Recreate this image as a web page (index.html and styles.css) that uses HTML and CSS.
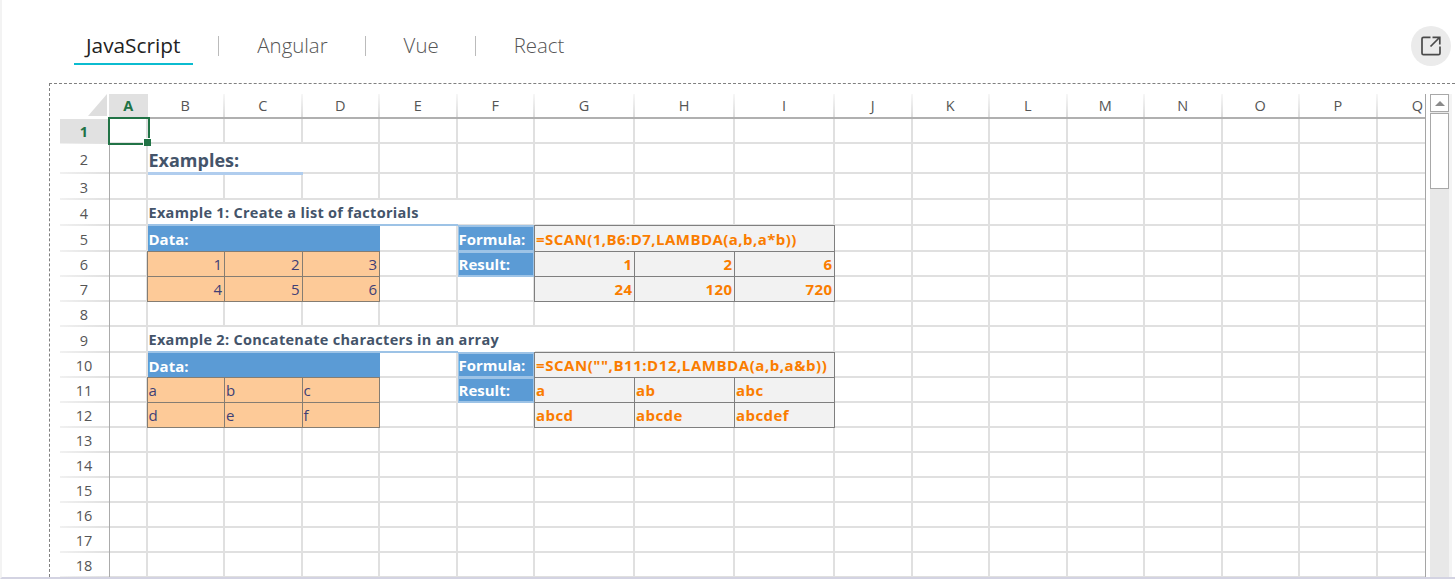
FILE: index.html
```html
<!DOCTYPE html>
<html lang="en">
<head>
<meta charset="utf-8">
<title>SCAN examples</title>
<link rel="stylesheet" href="styles.css">
</head>
<body>
<div class="page">
  <header class="topbar">
    <nav class="tabs">
      <a class="tab active">JavaScript</a>
      <span class="sep"></span>
      <a class="tab">Angular</a>
      <span class="sep"></span>
      <a class="tab">Vue</a>
      <span class="sep"></span>
      <a class="tab">React</a>
    </nav>
    <button class="open-btn" aria-label="Open in new window">
      <svg width="20" height="20" viewBox="0 0 20 20" fill="none" stroke="#4a4a4a" stroke-width="1.7">
        <path d="M9.5 1.3H2.5A1.5 1.5 0 0 0 1 2.8V17.2A1.5 1.5 0 0 0 2.5 18.7H17.5A1.5 1.5 0 0 0 19 17.2V10.5"/>
        <path d="M9.5 10.5L18.5 1.5M11.5 1.3H18.8V8.5"/>
      </svg>
    </button>
  </header>

  <section class="frame">
    <div class="grid">
      <!-- grid lines -->
      <i class="vl ca"></i><i class="vl cb"></i><i class="vl cc"></i><i class="vl cd"></i><i class="vl ce"></i><i class="vl cf"></i>
      <i class="vl cg"></i><i class="vl ch"></i><i class="vl ci"></i><i class="vl cj"></i><i class="vl ck"></i><i class="vl cl"></i>
      <i class="vl cm"></i><i class="vl cn"></i><i class="vl co"></i><i class="vl cp"></i>
      <i class="hl r1"></i><i class="hl r2"></i><i class="hl r3"></i><i class="hl r4"></i><i class="hl r5"></i><i class="hl r6"></i>
      <i class="hl r7"></i><i class="hl r8"></i><i class="hl r9"></i><i class="hl r10"></i><i class="hl r11"></i><i class="hl r12"></i>
      <i class="hl r13"></i><i class="hl r14"></i><i class="hl r15"></i><i class="hl r16"></i><i class="hl r17"></i><i class="hl r18"></i>
      <i class="rowhead-line"></i>
      <i class="colhead-line"></i>
      <i class="edge-line"></i>

      <!-- column headers -->
      <div class="corner"><span class="corner-tri"></span></div>
      <div class="ch-cell ca sel">A</div>
      <div class="ch-cell cb">B</div><div class="ch-cell cc">C</div><div class="ch-cell cd">D</div><div class="ch-cell ce">E</div>
      <div class="ch-cell cf">F</div><div class="ch-cell cg">G</div><div class="ch-cell ch">H</div><div class="ch-cell ci">I</div>
      <div class="ch-cell cj">J</div><div class="ch-cell ck">K</div><div class="ch-cell cl">L</div><div class="ch-cell cm">M</div>
      <div class="ch-cell cn">N</div><div class="ch-cell co">O</div><div class="ch-cell cp">P</div><div class="ch-cell cq">Q</div>

      <!-- row headers -->
      <div class="rh r1 sel">1</div><div class="rh r2">2</div><div class="rh r3">3</div><div class="rh r4">4</div>
      <div class="rh r5">5</div><div class="rh r6">6</div><div class="rh r7">7</div><div class="rh r8">8</div>
      <div class="rh r9">9</div><div class="rh r10">10</div><div class="rh r11">11</div><div class="rh r12">12</div>
      <div class="rh r13">13</div><div class="rh r14">14</div><div class="rh r15">15</div><div class="rh r16">16</div>
      <div class="rh r17">17</div><div class="rh r18">18</div>

      <!-- content -->
      <div class="title r2 b-d">Examples:</div>

      <div class="heading r4 b-f">Example 1: Create a list of factorials</div>
      <div class="label r5 b-e">Data:</div>
      <div class="input num r6 cb">1</div><div class="input num r6 cc">2</div><div class="input num r6 cd">3</div>
      <div class="input num r7 cb">4</div><div class="input num r7 cc">5</div><div class="input num r7 cd">6</div>
      <div class="label boxed r5 cf">Formula:</div>
      <div class="label boxed r6 cf">Result:</div>
      <div class="out r5 g-j">=SCAN(1,B6:D7,LAMBDA(a,b,a*b))</div>
      <div class="out num r6 cg">1</div><div class="out num r6 ch">2</div><div class="out num r6 ci">6</div>
      <div class="out num r7 cg">24</div><div class="out num r7 ch">120</div><div class="out num r7 ci">720</div>

      <div class="blank r9 cf"></div>
      <div class="heading r9 b-f">Example 2: Concatenate characters in an array</div>
      <div class="label r10 b-e">Data:</div>
      <div class="input r11 cb">a</div><div class="input r11 cc">b</div><div class="input r11 cd">c</div>
      <div class="input r12 cb">d</div><div class="input r12 cc">e</div><div class="input r12 cd">f</div>
      <div class="label boxed r10 cf">Formula:</div>
      <div class="label boxed r11 cf">Result:</div>
      <div class="out wide r10 g-j">=SCAN("",B11:D12,LAMBDA(a,b,a&amp;b))</div>
      <div class="out r11 cg">a</div><div class="out r11 ch">ab</div><div class="out r11 ci">abc</div>
      <div class="out r12 cg">abcd</div><div class="out r12 ch">abcde</div><div class="out r12 ci">abcdef</div>

      <div class="selection r1 ca"><span class="handle"></span></div>
    </div>

    <aside class="scrollbar">
      <div class="sb-up"><span class="sb-arrow"></span></div>
      <div class="sb-thumb"></div>
    </aside>
  </section>
</div>
</body>
</html>
```

FILE: styles.css
```css
* { box-sizing: border-box; }
html, body { margin: 0; padding: 0; height: 579px; overflow: hidden; background: #fff; }

.page {
  height: 579px;
  border-left: 2px solid #f3f3f3;
  border-bottom: 2px solid #d3d3e2;
  display: flex;
  flex-direction: column;
  overflow: hidden;
  font-family: "Open Sans", "Noto Sans", sans-serif;
}

/* tabs */
.topbar {
  height: 83px;
  flex: none;
  display: flex;
  justify-content: space-between;
  padding: 26px 4px 0 72px;
}
.tabs { display: flex; align-items: flex-start; height: 39px; }
.tab {
  height: 39px;
  padding: 5px 12px 0;
  font-size: 20.4px;
  line-height: 28px;
  font-weight: 300;
  color: #555;
  white-space: nowrap;
}
.tab.active {
  padding-right: 13px;
  font-size: 20.8px;
  color: #222;
  font-weight: 400;
  border-bottom: 2px solid #0bbcd0;
}
.sep { width: 1px; height: 20px; margin: 10px 26px 0 25px; background: #bbb; }
.sep:last-of-type { margin-left: 24px; }
.open-btn {
  width: 40px;
  height: 40px;
  padding: 0;
  border: 0;
  border-radius: 50%;
  background: #ebebeb;
  display: flex;
  align-items: center;
  justify-content: center;
}

/* frame */
.frame {
  flex: 1;
  min-height: 0;
  margin-left: 47px;
  padding: 10px 0 0 10px;
  border-top: 1px dashed #808080;
  border-left: 1px dashed #808080;
  display: flex;
  align-items: flex-start;
  overflow: hidden;
}

.grid {
  flex: none;
  display: grid;
  font-size: 14.5px;
  grid-template-columns:
    [rh] 50px [a] 37.5px [b] 77.5px [c] 77.5px [d] 77.5px [e] 77.5px [f] 77.5px
    [g] 100px [h] 100px [i] 100px [j] 77.5px [k] 77.5px [l] 77.5px [m] 77.5px
    [n] 77.5px [o] 77.5px [p] 77.5px [q] 48.5px [end];
  grid-template-rows:
    [hd] 25px [r1] 25px [r2] 30px [r3] 26px [r4] 26px [r5] 26px [r6] 25px [r7] 25px
    [r8] 25px [r9] 26px [r10] 25px [r11] 25px [r12] 25px [r13] 25px [r14] 25px
    [r15] 25px [r16] 25px [r17] 25px [r18] 25px [rend];
}

/* placement */
.ca { grid-column: a; } .cb { grid-column: b; } .cc { grid-column: c; } .cd { grid-column: d; }
.ce { grid-column: e; } .cf { grid-column: f; } .cg { grid-column: g; } .ch { grid-column: h; }
.ci { grid-column: i; } .cj { grid-column: j; } .ck { grid-column: k; } .cl { grid-column: l; }
.cm { grid-column: m; } .cn { grid-column: n; } .co { grid-column: o; } .cp { grid-column: p; }
.cq { grid-column: q; }
.b-d { grid-column: b / d; } .b-e { grid-column: b / e; } .b-f { grid-column: b / f; } .g-j { grid-column: g / j; }
.r1 { grid-row: r1; } .r2 { grid-row: r2; } .r3 { grid-row: r3; } .r4 { grid-row: r4; }
.r5 { grid-row: r5; } .r6 { grid-row: r6; } .r7 { grid-row: r7; } .r8 { grid-row: r8; }
.r9 { grid-row: r9; } .r10 { grid-row: r10; } .r11 { grid-row: r11; } .r12 { grid-row: r12; }
.r13 { grid-row: r13; } .r14 { grid-row: r14; } .r15 { grid-row: r15; } .r16 { grid-row: r16; }
.r17 { grid-row: r17; } .r18 { grid-row: r18; }

/* lines */
.vl { grid-row: r1 / rend; border-right: 2px solid #e0e0e0; }
.hl {
  grid-column: rh / end;
  border-bottom: 2px solid #e0e0e0;
  border-image: linear-gradient(to right, #f1f1f1, #e0e0e0 50px) 1;
}
.rowhead-line { grid-column: rh; grid-row: r1 / rend; border-right: 1px solid #ababab; z-index: 1; }
.colhead-line { grid-column: a / end; grid-row: hd; border-bottom: 2px solid #b0b0b0; z-index: 1; }
.edge-line { grid-column: q; grid-row: hd / rend; border-right: 1px solid #a5a5a5; z-index: 1; }

/* headers */
.corner { grid-column: rh; grid-row: hd; display: flex; justify-content: flex-end; padding: 0 3px 3px 0; }
.corner-tri {
  width: 19px;
  height: 22px;
  background: #dedede;
  clip-path: polygon(100% 0, 100% 100%, 0 100%);
}
.ch-cell {
  grid-row: hd;
  display: flex;
  align-items: center;
  justify-content: center;
  padding-bottom: 2px;
  color: #555;
  border-right: 2px solid #e2e2e2;
  border-image: linear-gradient(#f8f8f8, #d9d9d9) 1;
}
.ch-cell.cq { justify-content: flex-end; border-right: 0; padding-right: 3px; }
.ch-cell.sel { background: #e1e1e1; color: #217346; font-weight: 700; margin-left: -1px; border-right: 0; }
.rh {
  grid-column: rh;
  display: flex;
  align-items: center;
  justify-content: center;
  padding: 0 2px 0 0;
  color: #555;
}
.rh.sel { background: #e1e1e1; color: #217346; font-weight: 700; margin-bottom: 1px; }

/* cells */
.title, .heading, .label, .input, .out, .blank {
  display: flex;
  align-items: center;
  padding: 0 2px 0 1px;
  white-space: nowrap;
}
.title {
  background: #fff;
  border-bottom: 3px solid #b0cdee;
  margin-bottom: -1px;
  padding-top: 4px;
  font-size: 18px;
  font-weight: 700;
  color: #44546a;
}
.heading {
  background: #fff;
  border-bottom: 2px solid #9dc3e6;
  padding-top: 1px;
  font-size: 14.5px;
  letter-spacing: 0.3px;
  font-weight: 700;
  color: #44546a;
}
.blank { background: #fff; }
.label {
  background: #5b9bd5;
  color: #fff;
  font-size: 15px;
  font-weight: 700;
}
.label.boxed { border: 2px solid #9dc3e6; border-left-width: 1px; padding-left: 0; margin-top: -1px; }
.input {
  background: #fdca98;
  color: #3f3f76;
  font-size: 15px;
  border: 1px solid #857d72;
  margin: -1px 0 0 -1px;
}
.out {
  background: #f2f2f2;
  color: #fa7d00;
  font-size: 15px;
  letter-spacing: 0.45px;
  font-weight: 700;
  border: 1px solid #7f7f7f;
  margin: -1px 0 0 -1px;
}
.out.wide { letter-spacing: 0.55px; }
.num { justify-content: flex-end; }
.out.num { padding-right: 1.5px; }

/* selection */
.selection {
  position: relative;
  border: 2px solid #217346;
  margin: -2px -2px -1px -2px;
  z-index: 2;
}
.handle {
  position: absolute;
  right: -3px;
  bottom: -3px;
  width: 8px;
  height: 8px;
  background: #217346;
  border: 1px solid #fff;
  border-right: 0;
  border-bottom: 0;
}

/* scrollbar */
.scrollbar {
  flex: none;
  width: 22px;
  height: 490px;
  margin-left: 4px;
  padding-right: 3px;
  background: linear-gradient(to right, #e8e8e8 19px, #f4f4f4 19px);
  display: flex;
  flex-direction: column;
  gap: 1px;
}
.sb-up {
  height: 18px;
  border: 1px solid #a8a8a8;
  background: #fff;
  display: flex;
  justify-content: center;
  padding-top: 6px;
}
.sb-arrow {
  width: 0;
  height: 0;
  border-left: 5px solid transparent;
  border-right: 5px solid transparent;
  border-bottom: 5px solid #8a8a8a;
}
.sb-thumb { height: 76px; border: 1px solid #a8a8a8; background: #fff; }
```
